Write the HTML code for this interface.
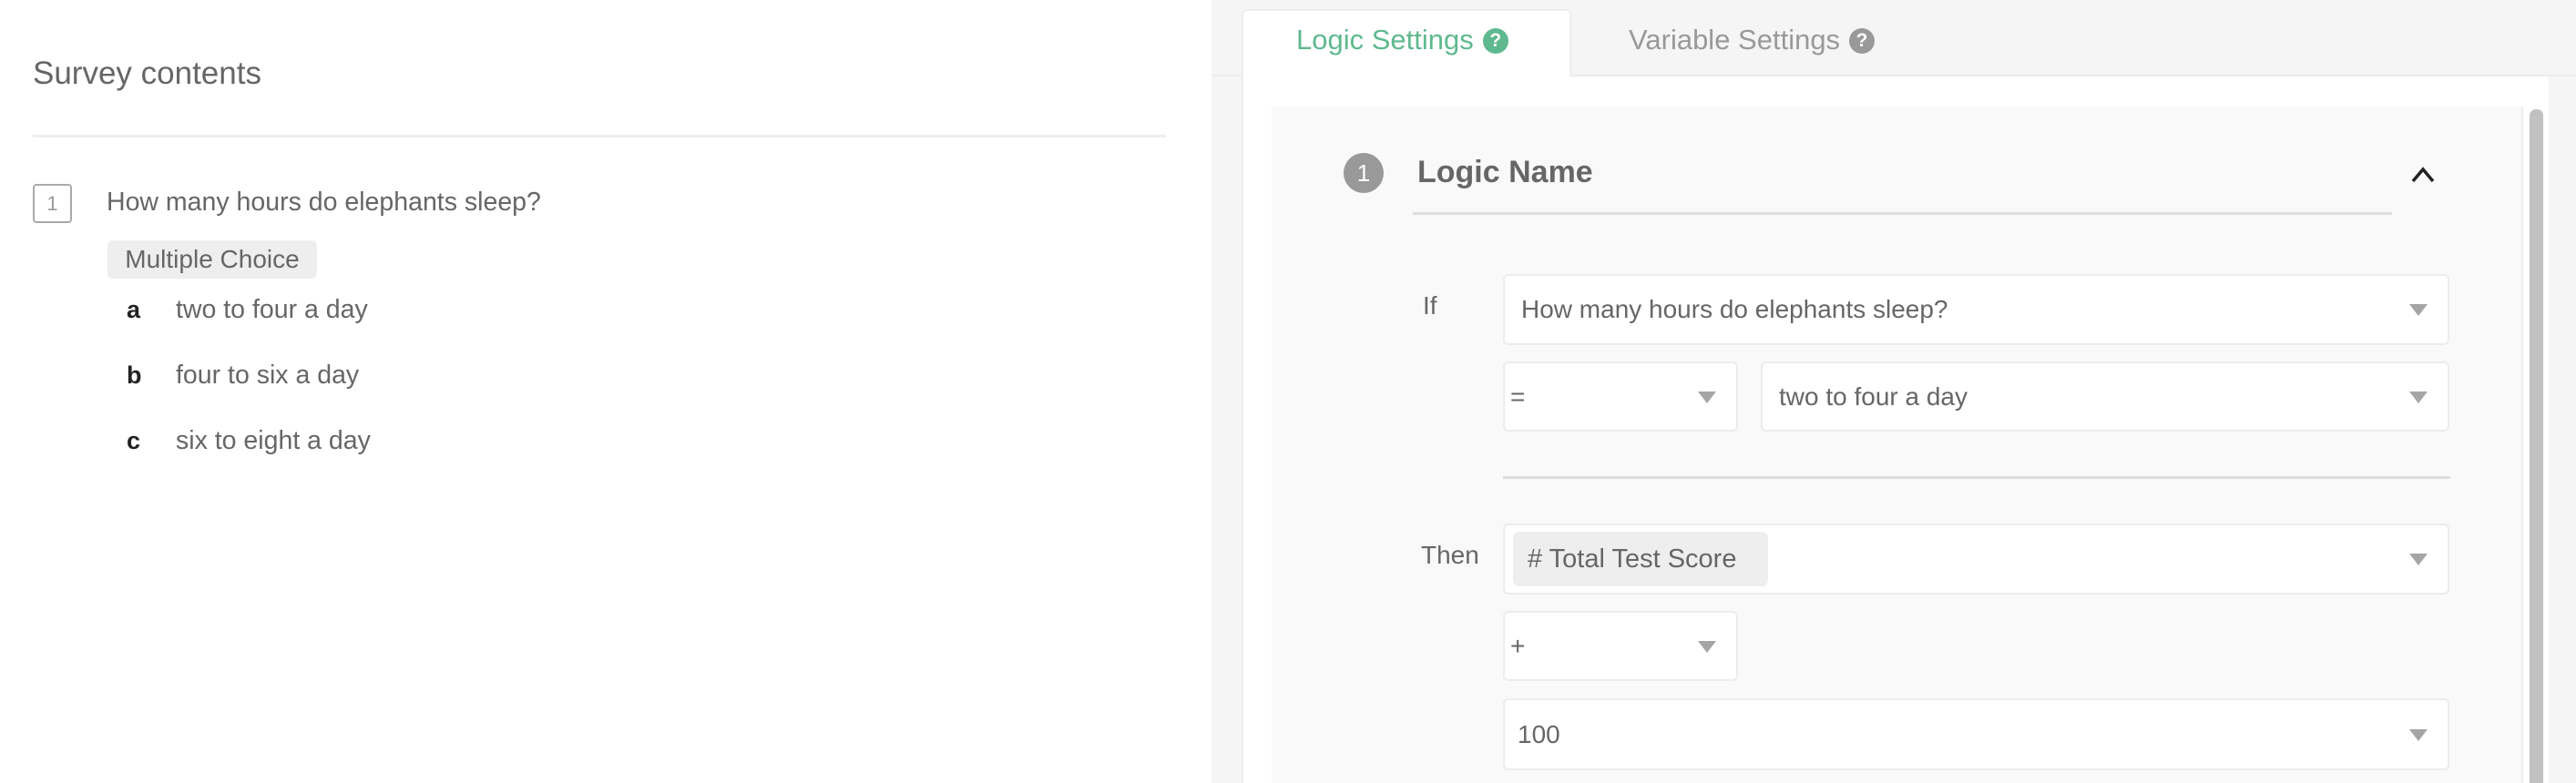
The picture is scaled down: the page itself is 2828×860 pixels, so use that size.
<!DOCTYPE html>
<html><head><meta charset="utf-8"><style>
*{box-sizing:border-box;margin:0;padding:0}
body{width:2828px;height:860px;overflow:hidden;background:#fff;font-family:"Liberation Sans",sans-serif;color:#666;position:relative}
.a{position:absolute;white-space:nowrap}
.sel{position:absolute;background:#fff;border:2px solid #ececec;border-radius:6px}
.sel .t{position:absolute;left:18px;top:50%;transform:translateY(-50%);font-size:28px;color:#666}
.arr{position:absolute;right:22px;top:50%;margin-top:-6px;width:0;height:0;border-left:10px solid transparent;border-right:10px solid transparent;border-top:13px solid #a5a5a5}
.q{display:inline-block;width:28px;height:28px;border-radius:50%;color:#fff;font-size:21px;font-weight:bold;text-align:center;line-height:28px;vertical-align:3px;margin-left:10px}
</style></head><body>
<div class="a" style="left:36px;top:61px;font-size:35px;color:#666">Survey contents</div>
<div class="a" style="left:36px;top:148px;width:1244px;height:3px;background:#eee"></div>
<div class="a" style="left:36px;top:202px;width:43px;height:43px;border:2px solid #aaa;border-radius:4px;font-size:22px;color:#999;text-align:center;line-height:39px">1</div>
<div class="a" style="left:117px;top:206px;font-size:28.5px">How many hours do elephants sleep?</div>
<div class="a" style="left:118px;top:264px;width:230px;height:42px;background:#eee;border-radius:6px;font-size:28px;line-height:42px;text-align:center">Multiple Choice</div>
<div class="a" style="left:139px;top:325px;font-size:27px;font-weight:bold;color:#222">a</div>
<div class="a" style="left:193px;top:324px;font-size:28.5px">two to four a day</div>
<div class="a" style="left:139px;top:397px;font-size:27px;font-weight:bold;color:#222">b</div>
<div class="a" style="left:193px;top:396px;font-size:28.5px">four to six a day</div>
<div class="a" style="left:139px;top:469px;font-size:27px;font-weight:bold;color:#222">c</div>
<div class="a" style="left:193px;top:468px;font-size:28.5px">six to eight a day</div>

<div class="a" style="left:1330px;top:0;width:1498px;height:860px;background:#f5f5f5"></div>
<div class="a" style="left:1330px;top:82px;width:1498px;height:2px;background:#ececec"></div>
<div class="a" style="left:1363px;top:10px;width:362px;height:120px;background:#fff;border:2px solid #eee;border-bottom:none;border-radius:6px 6px 0 0"></div>
<div class="a" style="left:1363px;top:84px;width:1435px;height:776px;background:#fff;border-left:2px solid #eee"></div>
<div class="a" style="left:1423px;top:26px;font-size:31px;color:#5fb98e">Logic Settings<span class="q" style="background:#5fb98e">?</span></div>
<div class="a" style="left:1788px;top:26px;font-size:31px;color:#999">Variable Settings<span class="q" style="background:#999">?</span></div>
<div class="a" style="left:1396px;top:117px;width:1374px;height:743px;background:#f9f9f9;border-right:2px solid #eee"></div>
<div class="a" style="left:2777px;top:120px;width:15px;height:740px;background:#c1c1c1;border-radius:7px 7px 0 0"></div>

<div class="a" style="left:1475px;top:168px;width:44px;height:44px;border-radius:50%;background:#999;color:#fff;font-size:26px;text-align:center;line-height:44px">1</div>
<div class="a" style="left:1556px;top:170px;font-size:34px;font-weight:bold;color:#666">Logic Name</div>
<div class="a" style="left:1551px;top:233px;width:1075px;height:3px;background:#ddd"></div>
<svg class="a" style="left:2646px;top:180px" width="28" height="22" viewBox="0 0 28 22"><path d="M3 19 L14 6 L25 19" fill="none" stroke="#222" stroke-width="3.5"/></svg>

<div class="a" style="left:1562px;top:320px;font-size:28px">If</div>
<div class="sel" style="left:1650px;top:301px;width:1039px;height:78px"><span class="t">How many hours do elephants sleep?</span><i class="arr"></i></div>
<div class="sel" style="left:1650px;top:397px;width:258px;height:77px"><span class="t" style="left:6px">=</span><i class="arr"></i></div>
<div class="sel" style="left:1933px;top:397px;width:756px;height:77px"><span class="t">two to four a day</span><i class="arr"></i></div>
<div class="a" style="left:1650px;top:523px;width:1040px;height:3px;background:#ddd"></div>

<div class="a" style="left:1560px;top:594px;font-size:28px">Then</div>
<div class="sel" style="left:1650px;top:575px;width:1039px;height:78px"><span class="a" style="left:9px;top:7px;width:280px;height:60px;background:#eee;border-radius:7px;font-size:29px;line-height:60px;padding-left:16px;color:#666"># Total Test Score</span><i class="arr"></i></div>
<div class="sel" style="left:1650px;top:671px;width:258px;height:77px"><span class="t" style="left:6px">+</span><i class="arr"></i></div>
<div class="sel" style="left:1650px;top:767px;width:1039px;height:79px"><span class="t" style="left:14px">100</span><i class="arr"></i></div>
</body></html>
